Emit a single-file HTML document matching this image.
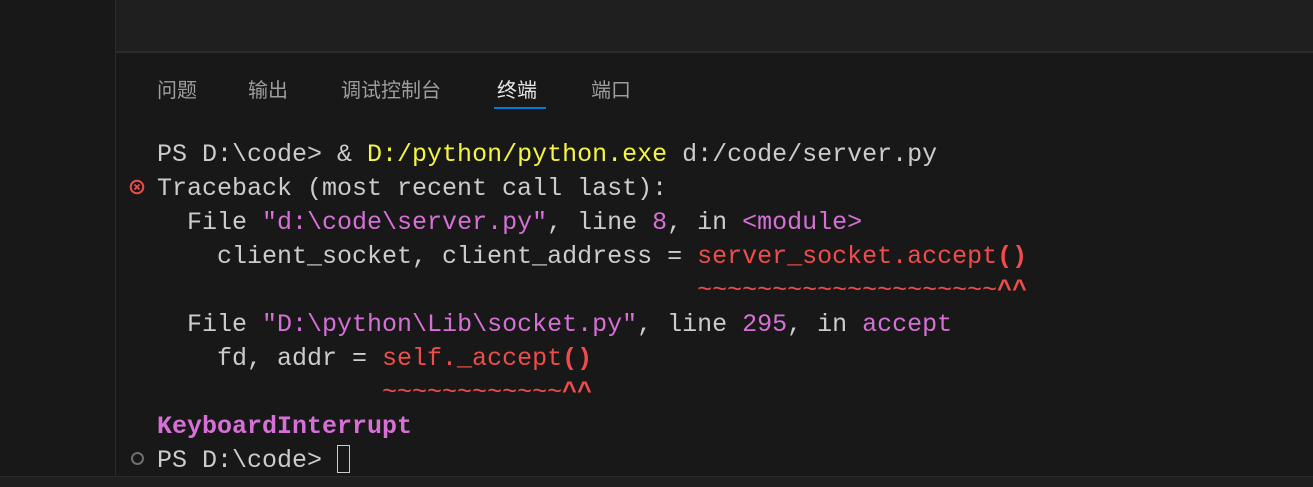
<!DOCTYPE html>
<html><head><meta charset="utf-8"><style>
html,body{margin:0;padding:0;width:1313px;height:486px;overflow:hidden;background:#181818;}
.side{position:absolute;left:0;top:0;width:115px;height:486px;background:#181818;border-right:1px solid #2b2b2b;}
.ed{position:absolute;left:116px;top:0;right:0;height:51px;background:#1f1f1f;border-bottom:2px solid #2b2b2b;}
.bot{position:absolute;left:0;right:0;top:476px;height:10px;background:#1f1f1f;border-top:1px solid #2b2b2b;}
.tab{position:absolute;top:78px;font:20px "Liberation Sans","Noto Sans CJK SC",sans-serif;color:#9d9d9d;line-height:26px;}
.act{color:#e7e7e7;}
.ul{position:absolute;left:494px;top:107px;width:52px;height:2px;background:#0078d4;}
.term{position:absolute;left:157px;top:138px;font:25px "Liberation Mono","DejaVu Sans Mono",monospace;color:#cccccc;line-height:34px;white-space:pre;}
.y{color:#f5f543}.p{color:#d670d6}.r{color:#f14c4c}.rb{color:#f14c4c;font-weight:bold}
.b{font-weight:bold}
.cur{display:inline-block;width:13px;height:28px;border:1.5px solid #cccccc;box-sizing:border-box;vertical-align:-6px;}
.x{position:absolute;left:129px;top:179px;}
.o{position:absolute;left:131px;top:452px;width:13px;height:13px;border:2.5px solid #6e6e6e;border-radius:50%;box-sizing:border-box;}
</style></head><body>
<div class="side"></div><div class="ed"></div><div class="bot"></div>
<div class="tab" style="left:157px">问题</div>
<div class="tab" style="left:248px">输出</div>
<div class="tab" style="left:341px">调试控制台</div>
<div class="tab act" style="left:497px">终端</div>
<div class="tab" style="left:591px">端口</div>
<div class="ul"></div>
<svg class="x" width="16" height="16" viewBox="0 0 16 16"><circle cx="8" cy="8" r="6.3" fill="none" stroke="#f14c4c" stroke-width="2"/><path d="M5.5 5.5L10.5 10.5M10.5 5.5L5.5 10.5" stroke="#f14c4c" stroke-width="1.8"/></svg>
<div class="o"></div>
<div class="term">PS D:\code&gt; &amp; <span class="y">D:/python/python.exe</span> d:/code/server.py
Traceback (most recent call last):
  File <span class="p">"d:\code\server.py"</span>, line <span class="p">8</span>, in <span class="p">&lt;module&gt;</span>
    client_socket, client_address = <span class="r">server_socket.accept</span><span class="rb">()</span>
                                    <span class="r">~~~~~~~~~~~~~~~~~~~~</span><span class="rb">^^</span>
  File <span class="p">"D:\python\Lib\socket.py"</span>, line <span class="p">295</span>, in <span class="p">accept</span>
    fd, addr = <span class="r">self._accept</span><span class="rb">()</span>
               <span class="r">~~~~~~~~~~~~</span><span class="rb">^^</span>
<span class="p b">KeyboardInterrupt</span>
PS D:\code&gt; <span class="cur"></span></div>
</body></html>
